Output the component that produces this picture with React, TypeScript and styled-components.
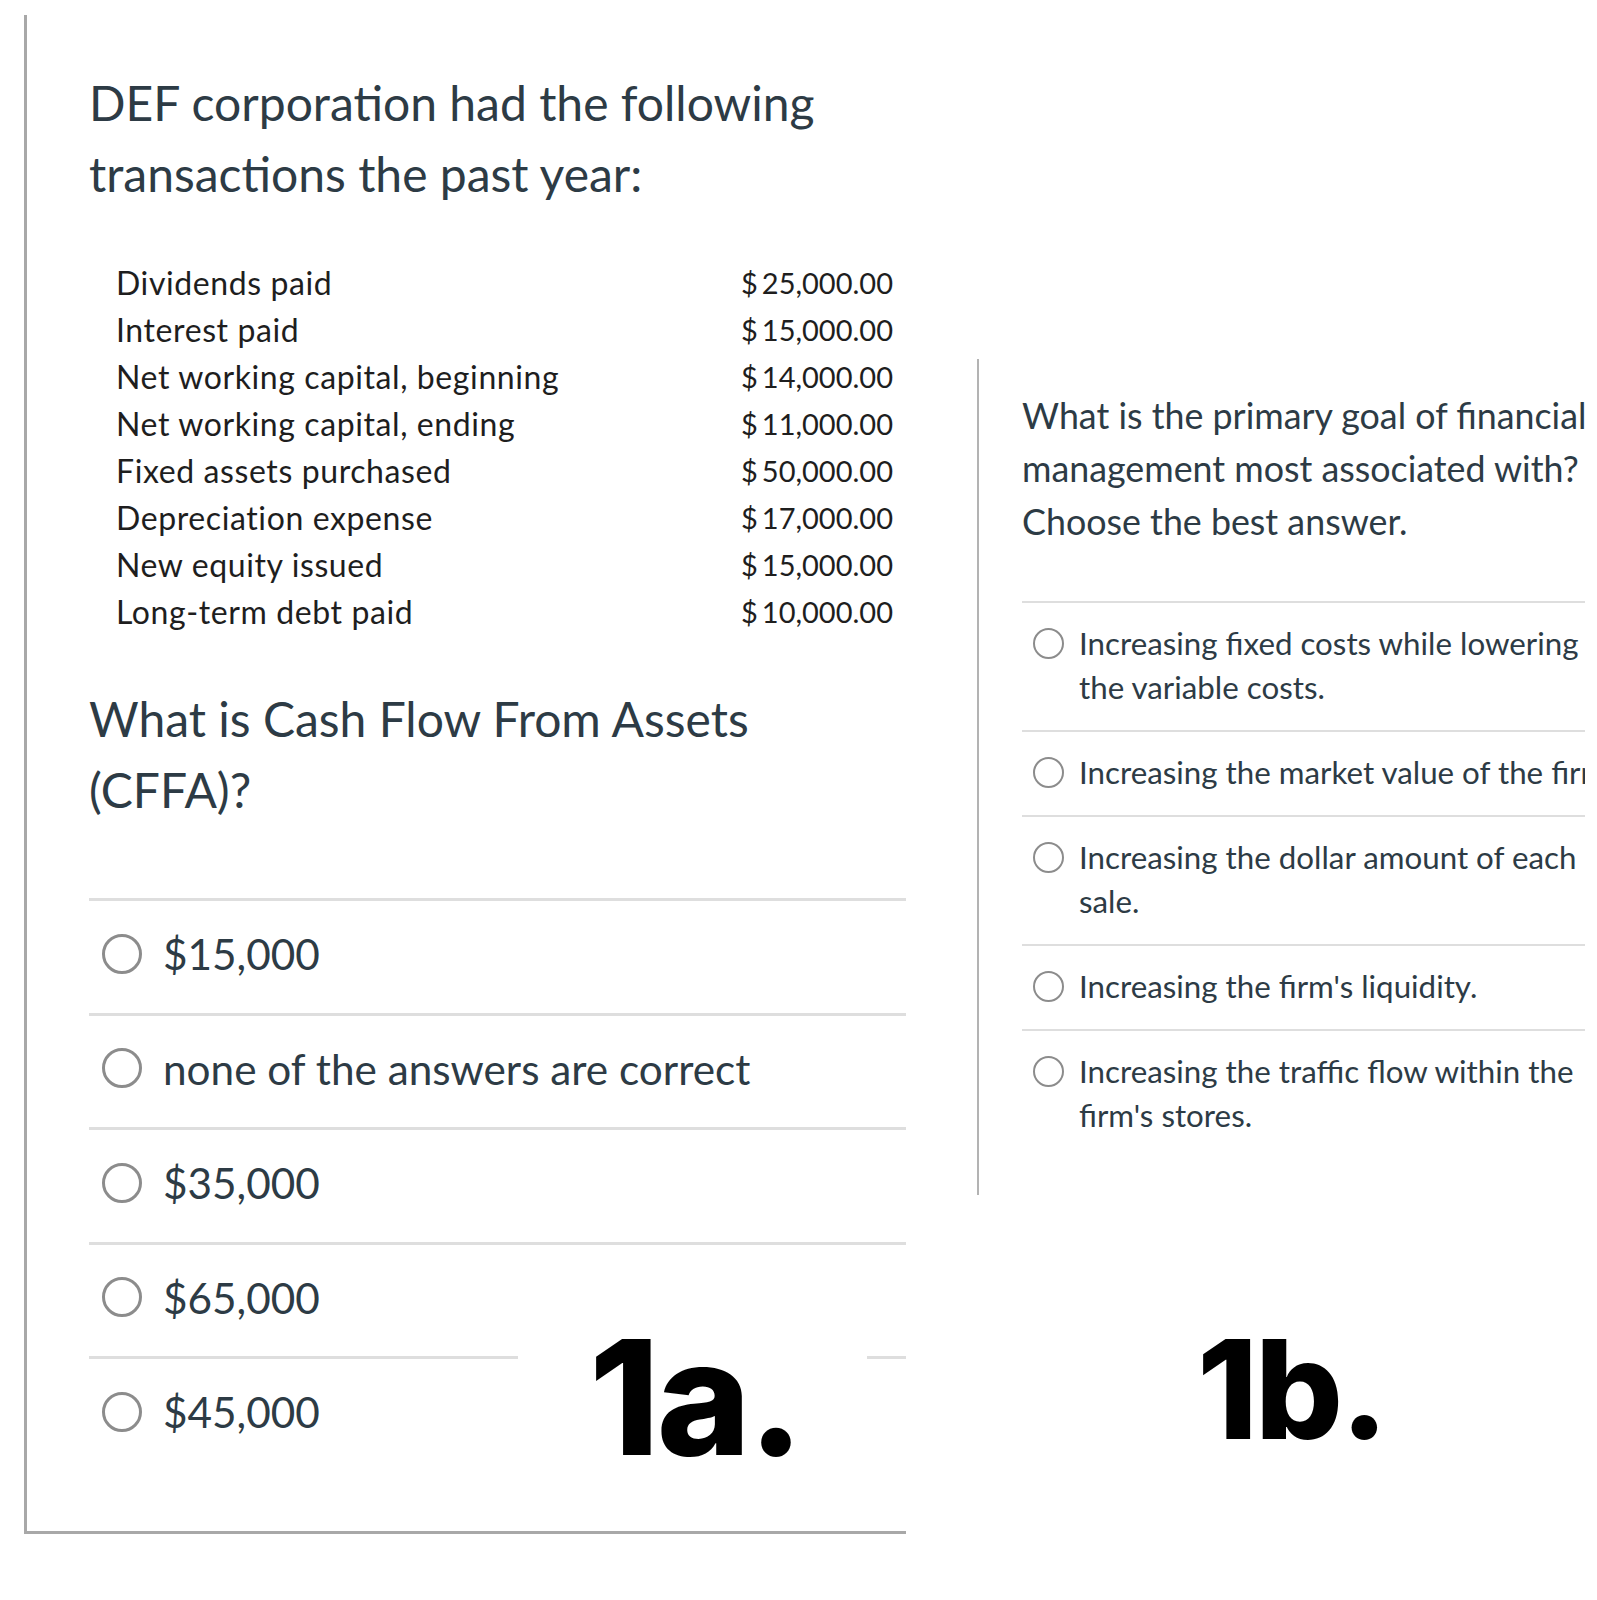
import styled, { createGlobalStyle } from "styled-components";

const GlobalStyle = createGlobalStyle`
	*, *::before, *::after {
		box-sizing: border-box;
	}
	html, body {
		margin: 0;
		padding: 0;
		background: #ffffff;
	}
	body {
		font-family: Lato, "Open Sans", sans-serif;
		color: #2d3b45;
	}
`

const Page = styled.div`
	display: flex;
	align-items: flex-start;
	width: 1597px;
	height: 1600px;
	overflow: hidden;
`

// ---- left question (1a) ----

const LeftPanel = styled.section`
	position: relative;
	margin: 15px 0 0 24px;
	width: 882px;
	padding: 52px 0 60px 62px;
	border-left: 3px solid #a8a8a8;
	border-bottom: 3px solid #a8a8a8;
`

const BigQuestion = styled.div<{ $gap?: number }>`
	margin-top: ${p => p.$gap || 0}px;
	font-size: 48px;
	line-height: 71px;
	white-space: nowrap;
`

const Table = styled.div`
	margin: 50px 0 0 27px;
	width: 777px;
	display: grid;
	grid-template-columns: 1fr auto;
	grid-auto-rows: 47px;
	align-items: center;
	color: #1e1e1e;
`

const Label = styled.div`
	font-size: 32px;
	letter-spacing: 0.6px;
	white-space: nowrap;
`

const Amount = styled.div`
	display: flex;
	justify-content: flex-end;
	font-size: 29px;
	white-space: nowrap;
`

const Dollar = styled.span`
	margin-right: 4px;
`

const BigAnswers = styled.div`
	margin-top: 73px;
`

const BigAnswerRow = styled.div`
	display: flex;
	align-items: center;
	height: 114.5px;
	padding-bottom: 6px;
	border-top: 3px solid #dedede;
	font-size: 42.3px;
`

const BigRadio = styled.span`
	flex: none;
	width: 40px;
	height: 40px;
	margin: 0 21px 0 13px;
	border: 3px solid #8c8c8c;
	border-radius: 50%;
`

// label pasted over the last divider, so it keeps a white backing
const TagOverLine = styled.div`
	position: absolute;
	left: 491px;
	top: 1302px;
	width: 349px;
	height: 160px;
	padding-left: 71px;
	background: #ffffff;
	font-family: Inter, "Liberation Sans", sans-serif;
	font-weight: 800;
	font-size: 160px;
	line-height: 1;
	letter-spacing: -3px;
	color: #000000;
`

// ---- right question (1b) ----

const RightColumn = styled.div`
	margin: 359px 0 0 71px;
	width: 608px;
	overflow: hidden;
	display: flex;
	flex-direction: column;
`

const RightPanel = styled.section`
	padding: 30px 0 37px 43px;
	border-left: 2px solid #b3b3b3;
	white-space: nowrap;
`

const SmallQuestion = styled.div`
	font-size: 35.8px;
	line-height: 53px;
`

const SmallAnswers = styled.div`
	margin-top: 53px;
`

const SmallAnswerRow = styled.div`
	display: flex;
	align-items: flex-start;
	padding: 18px 0 21px;
	border-top: 2px solid #dedede;
	font-size: 31.3px;
	line-height: 44px;
`

const SmallRadio = styled.span`
	flex: none;
	width: 31px;
	height: 31px;
	margin: 6.5px 15px 0 11px;
	border: 2.5px solid #8c8c8c;
	border-radius: 50%;
`

const Line = styled.div``

const TagBelow = styled.div`
	margin-top: 125px;
	padding: 0 0 30px 220px;
	font-family: Inter, "Liberation Sans", sans-serif;
	font-weight: 800;
	font-size: 138px;
	line-height: 1;
	letter-spacing: -3px;
	color: #000000;
`

const transactions = [
	['Dividends paid', '25,000.00'],
	['Interest paid', '15,000.00'],
	['Net working capital, beginning', '14,000.00'],
	['Net working capital, ending', '11,000.00'],
	['Fixed assets purchased', '50,000.00'],
	['Depreciation expense', '17,000.00'],
	['New equity issued', '15,000.00'],
	['Long-term debt paid', '10,000.00'],
]

const cffaAnswers = ['$15,000', 'none of the answers are correct', '$35,000', '$65,000', '$45,000']

const goalAnswers = [
	['Increasing fixed costs while lowering', 'the variable costs.'],
	['Increasing the market value of the firm.'],
	['Increasing the dollar amount of each', 'sale.'],
	["Increasing the firm's liquidity."],
	['Increasing the traffic flow within the', "firm's stores."],
]

function App() {
	return (
		<>
			<GlobalStyle />
			<Page>
				<LeftPanel>
					<BigQuestion>
						<Line>DEF corporation had the following</Line>
						<Line>transactions the past year:</Line>
					</BigQuestion>
					<Table>
						{transactions.map(([label, value]) => [
							<Label key={label}>{label}</Label>,
							<Amount key={label + '-v'}>
								<Dollar>$</Dollar>
								{value}
							</Amount>,
						])}
					</Table>
					<BigQuestion $gap={48}>
						<Line>What is Cash Flow From Assets</Line>
						<Line>(CFFA)?</Line>
					</BigQuestion>
					<BigAnswers>
						{cffaAnswers.map((answer) => (
							<BigAnswerRow key={answer}>
								<BigRadio />
								{answer}
							</BigAnswerRow>
						))}
					</BigAnswers>
					<TagOverLine>1a.</TagOverLine>
				</LeftPanel>

				<RightColumn>
					<RightPanel>
						<SmallQuestion>
							<Line>What is the primary goal of financial</Line>
							<Line>management most associated with?</Line>
							<Line>Choose the best answer.</Line>
						</SmallQuestion>
						<SmallAnswers>
							{goalAnswers.map((lines) => (
								<SmallAnswerRow key={lines[0]}>
									<SmallRadio />
									<div>
										{lines.map((text) => (
											<Line key={text}>{text}</Line>
										))}
									</div>
								</SmallAnswerRow>
							))}
						</SmallAnswers>
					</RightPanel>
					<TagBelow>1b.</TagBelow>
				</RightColumn>
			</Page>
		</>
	)
}

export default App;
